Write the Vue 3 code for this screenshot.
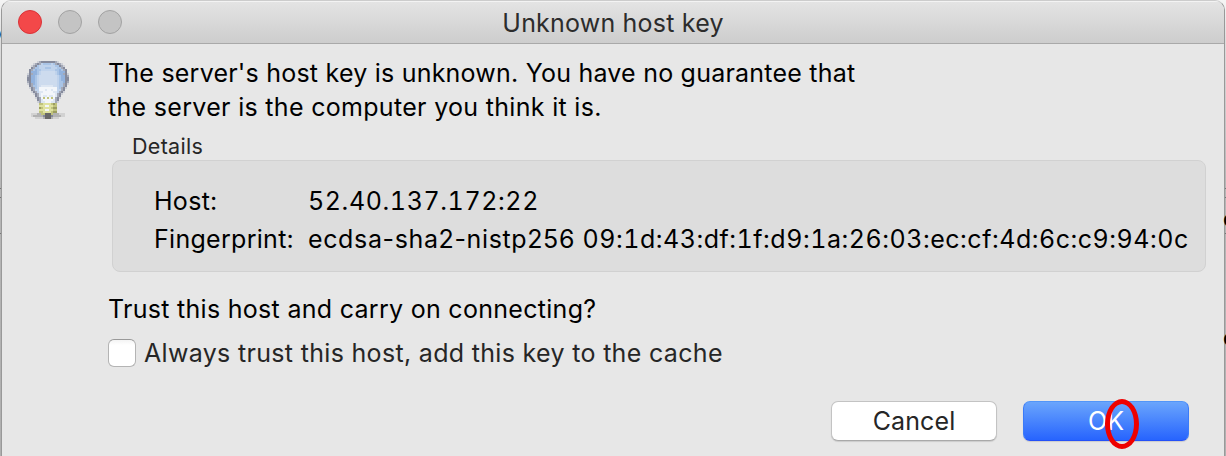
<template>
  <div class="desktop">
    <span class="behind behind-left">o</span>
    <span class="behind behind-mid">e</span>
    <span class="behind behind-low">e</span>

    <div class="dialog">
      <header class="titlebar">
        <div class="lights">
          <span class="light close"></span>
          <span class="light"></span>
          <span class="light"></span>
        </div>
        <h1 class="title">Unknown host key</h1>
      </header>

      <main class="body">
        <svg class="bulb" width="42" height="58" viewBox="0 0 21 29" shape-rendering="crispEdges">
          <template v-for="(row, y) in bulb" :key="y">
            <rect
              v-for="p in row"
              :key="p.x"
              :x="p.x"
              :y="y"
              width="1"
              height="1"
              :fill="p.fill"
            />
          </template>
        </svg>

        <div class="content">
          <p class="message">
            <span class="line1">The server's host key is unknown. You have no guarantee that</span><br />
            <span class="line2">the server is the computer you think it is.</span>
          </p>

          <div class="group-label">Details</div>
          <dl class="details">
            <dt>Host:</dt>
            <dd><span class="address">{{ host }}</span></dd>
            <dt>Fingerprint:</dt>
            <dd>
              <span class="algorithm">{{ fingerprint.algorithm }}</span>&nbsp;<span class="hash">{{ fingerprint.hash }}</span>
            </dd>
          </dl>

          <p class="question">Trust this host and carry on connecting?</p>
          <label class="trust">
            <input v-model="always" type="checkbox" />
            <span>Always trust this host, add this key to the cache</span>
          </label>

          <div class="actions">
            <button type="button" class="btn cancel">Cancel</button>
            <button type="button" class="btn ok">
              <span>OK</span>
              <i class="ring"></i>
            </button>
          </div>
        </div>
      </main>
    </div>
  </div>
</template>

<script setup>
import { ref } from 'vue'

const always = ref(false)

const host = '52.40.137.172:22'
const fingerprint = {
  algorithm: 'ecdsa-sha2-nistp256',
  hash: '09:1d:43:df:1f:d9:1a:26:03:ec:cf:4d:6c:c9:94:0c'
}

// light bulb, one letter per pixel
const palette = {
  o: '#858a9c',
  g: '#a4a9b7',
  l: '#ced1d8',
  b: '#92b2dd',
  c: '#a9c4e6',
  d: '#c0d3ec',
  e: '#cddbee',
  f: '#dde6f2',
  w: '#f3f6fa',
  y: '#dfe2a0',
  m: '#c0c37c',
  n: '#9b9d60',
  k: '#686868',
  s: '#b2b2b2',
  t: '#d2d2d2'
}

const bulb = [
  '.....lgooooooogl.....',
  '...lgogdccccdcgogl...',
  '..lgocddddddddccogl..',
  '..ogccdddcccdddccgo..',
  '.ogcbccdddddddccbcgo.',
  '.obbbcdeeeeeeedcbbbo.',
  'logbbcdeeeeeeedcbbgol',
  'gobbcdeeeeeeeeedcbbog',
  'oobbcdeeeeeeeeedcbboo',
  'oobbcdeeeeeeeeedcbboo',
  'gobbcdeeeeeeeeedccbog',
  'logbcdeeeeeeeeedccgol',
  '.ogccdeffffffeedccgo.',
  '.logcdwwwwwwwwwdcgol.',
  '..ogddwwwfwwfwwddgo..',
  '..logdffwwwwwffdgol..',
  '...logfwwwwwwwfgol...',
  '....ogfwffwffwfgo....',
  '....logwmwmwmwgol....',
  '.....ogfwwwwwfgo.....',
  '.....lgffwwwffgl.....',
  '......mmyyyymnm......',
  '......yyywwyymm......',
  '......nmyyyymnn......',
  '......yyywwyymm......',
  '......mmyyyymnn......',
  '..tttssmmkkkmsssttt..',
  '..tsssssokkkosssstt..',
  '....ttttskkksttt.....'
].map(row =>
  [...row]
    .map((c, x) => ({ x, fill: palette[c] }))
    .filter(p => p.fill)
)
</script>

<style>
body {
  margin: 0;
}
</style>

<style scoped>
.desktop {
  position: relative;
  box-sizing: border-box;
  height: 456px;
  padding: 0 1px 0 1px;
  overflow: hidden;
  background:
    linear-gradient(#777, #777) 0 188px / 100% 1px no-repeat,
    linear-gradient(#777, #777) 0 197px / 100% 1px no-repeat,
    linear-gradient(#777, #777) 0 233px / 100% 1px no-repeat,
    linear-gradient(#f5f5f5 0, #dedede 40px, #b6b6b6 180px, #b0b0b0 456px);
  font-family: Inter, "Liberation Sans", sans-serif;
  font-size: 25px;
  letter-spacing: 0.29px;
  color: #000;
}
.behind {
  position: absolute;
  z-index: 1;
  width: 14px;
  font-size: 24px;
  font-weight: 600;
  line-height: 24px;
}
.behind-left {
  left: -13px;
  top: 21px;
}
.behind-mid {
  right: -11px;
  top: 207px;
}
.behind-low {
  right: -11px;
  top: 326px;
}
.dialog {
  position: relative;
  box-sizing: border-box;
  height: 470px;
  border: 1px solid #999;
  border-top-color: #ccc;
  border-radius: 10px 10px 0 0;
  background: #e7e7e7;
  overflow: hidden;
}
.titlebar {
  position: relative;
  box-sizing: border-box;
  height: 43px;
  border-bottom: 1px solid #a9a9a9;
  background: linear-gradient(#e4e4e4, #cdcdcd);
  box-shadow: inset 0 1px #f3f3f3;
}
.lights {
  display: flex;
  gap: 16px;
  padding: 9px 0 0 16px;
}
.light {
  box-sizing: border-box;
  width: 24px;
  height: 24px;
  border: 1px solid #a2a2a2;
  border-radius: 50%;
  background: #c4c4c4;
}
.light.close {
  border-color: #d93237;
  background: #f34849;
}
.title {
  position: absolute;
  inset: 0 0 auto 0;
  margin: 0;
  text-align: center;
  font-size: 25px;
  font-weight: 400;
  line-height: 45px;
  letter-spacing: 0.2px;
  color: #2c2c2c;
}
.body {
  display: flex;
  align-items: flex-start;
  padding: 17px 18px 0 25px;
}
.bulb {
  flex: none;
}
.content {
  flex: 1;
  padding-left: 39px;
}
p,
dl,
dd {
  margin: 0;
}
.message {
  margin-top: -5px;
  line-height: 34px;
  white-space: nowrap;
}
.line1 {
  letter-spacing: 0.22px;
}
.line2 {
  letter-spacing: 0.31px;
}
.group-label {
  margin: 8px 0 0 24px;
  font-size: 21.5px;
  line-height: 28px;
  color: #262626;
}
.details {
  display: grid;
  grid-template-columns: 154px auto;
  box-sizing: border-box;
  height: 112px;
  margin: 0 0 0 4px;
  padding: 21px 0 0 41px;
  border: 1px solid #d1d1d1;
  border-radius: 8px;
  background: #dddddd;
  grid-auto-rows: 38px;
  line-height: 38px;
  white-space: nowrap;
}
.algorithm {
  letter-spacing: 0.63px;
}
.address,
.hash {
  font-variant-numeric: tabular-nums;
  letter-spacing: 0.6px;
}
.hash {
  letter-spacing: 0.53px;
}
.question {
  margin-top: 20px;
  line-height: 34px;
}
.trust {
  display: flex;
  align-items: center;
  gap: 8px;
  margin-top: 10px;
  height: 34px;
  letter-spacing: 0.32px;
  color: #262626;
}
.trust input {
  appearance: none;
  box-sizing: border-box;
  width: 28px;
  height: 28px;
  margin: 0;
  border: 1px solid #b4b4b4;
  border-top-color: #999;
  border-radius: 6px;
  background: linear-gradient(#f4f4f4, #fff 5px);
}
.actions {
  display: flex;
  justify-content: flex-end;
  gap: 26px;
  margin: 31px 17px 0 0;
}
.btn {
  position: relative;
  box-sizing: border-box;
  width: 166px;
  height: 40px;
  padding: 0;
  border: 1px solid #c3c3c3;
  border-bottom-color: #a9a9a9;
  border-radius: 7px;
  background: #fff;
  font: inherit;
  line-height: 36px;
  letter-spacing: 0.1px;
  color: #262626;
  box-shadow: 0 1px 1px rgba(0, 0, 0, 0.12);
}
.ok {
  border-color: #5295f8 #3b7bf8 #2450f7;
  background: linear-gradient(#6aa5fc, #2764fe);
  color: #fff;
}
.ring {
  position: absolute;
  left: 81px;
  top: -3px;
  box-sizing: border-box;
  width: 34px;
  height: 50px;
  border: 5px solid #ee0000;
  border-radius: 50%;
}
</style>
